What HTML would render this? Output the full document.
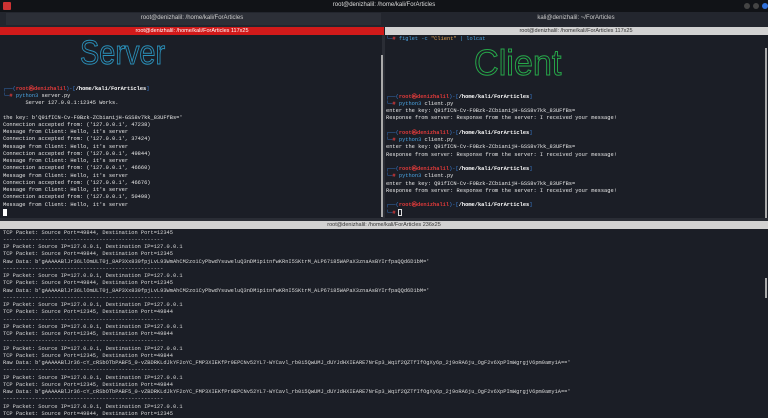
<!DOCTYPE html>
<html><head><meta charset="utf-8"><style>
*{margin:0;padding:0;box-sizing:border-box}
body{width:768px;height:414px;overflow:hidden;background:#1b1e26;font-family:"Liberation Mono",monospace;position:relative}
.abs{position:absolute}
.t{position:absolute;font-size:5.35px;line-height:7.25px;white-space:pre;color:#e6e6e6}
.sans{font-family:"Liberation Sans",sans-serif}
.r{color:#e03a3a;font-weight:bold}.b{color:#3a7fd6}.c{color:#4aa3e0}.y{color:#e0a050}.w{color:#fff;font-weight:bold}
</style></head><body>
<div class="abs" style="left:0;top:0;width:768px;height:12px;background:#111317"></div>
<div class="abs" style="left:3px;top:2px;width:8px;height:8px;background:#c33;border-radius:1px"></div>
<div class="abs sans" style="left:0;top:2px;width:768px;text-align:center;font-size:6px;color:#ddd">root@denizhalil: /home/kali/ForArticles</div>
<div class="abs" style="left:744px;top:3px;width:6px;height:6px;border-radius:50%;background:#444"></div>
<div class="abs" style="left:753px;top:3px;width:6px;height:6px;border-radius:50%;background:#444"></div>
<div class="abs" style="left:762px;top:3px;width:6px;height:6px;border-radius:50%;background:#2f6fd8"></div>
<div class="abs" style="left:0;top:12px;width:384px;height:15px;background:#23262e"></div>
<div class="abs" style="left:6px;top:13px;width:375px;height:12px;background:#2c2f37"></div>
<div class="abs sans" style="left:0;top:15px;width:384px;text-align:center;font-size:6px;color:#ccc">root@denizhalil: /home/kali/ForArticles</div>
<div class="abs" style="left:384px;top:12px;width:384px;height:15px;background:#23262e"></div>
<div class="abs sans" style="left:384px;top:15px;width:384px;text-align:center;font-size:6px;color:#ccc">kali@denizhalil: ~/ForArticles</div>
<div class="abs" style="left:0;top:27px;width:384px;height:8px;background:#d11a1a"></div>
<div class="abs sans" style="left:0;top:27.5px;width:384px;text-align:center;font-size:5.5px;color:#fff">root@denizhalil: /home/kali/ForArticles 117x25</div>
<div class="abs" style="left:385px;top:27px;width:383px;height:8px;background:#d2d2d2"></div>
<div class="abs sans" style="left:384px;top:27.5px;width:384px;text-align:center;font-size:5.5px;color:#333">root@denizhalil: /home/kali/ForArticles 117x25</div>
<div class="abs" style="left:382px;top:35px;width:3px;height:183px;background:#2a2d35"></div>
<div class="abs" style="left:381px;top:55px;width:2px;height:162px;background:#aaa"></div>
<div class="abs" style="left:765px;top:48px;width:2px;height:170px;background:#aaa"></div>
<div class="abs" style="left:80px;top:33px;font-family:'Liberation Sans',sans-serif;font-size:34px;line-height:40px;letter-spacing:0px;color:transparent;-webkit-text-stroke:1px #2a8fb8;transform:scaleX(0.85);transform-origin:left top">Server</div>
<div class="abs" style="left:474px;top:46px;font-family:'Liberation Sans',sans-serif;font-size:36px;line-height:34px;letter-spacing:0px;color:transparent;-webkit-text-stroke:1px #27a84a;transform:scaleX(0.95);transform-origin:left top">Client</div>
<div class="t" style="left:3px;top:85.5px"><span class="b">┌──(</span><span class="r">root㉿denizhalil</span><span class="b">)-[</span><span class="w">/home/kali/ForArticles</span><span class="b">]</span>
<span class="b">└─</span><span class="r">#</span> <span class="c">python3</span> server.py
       Server 127.0.0.1:12345 Works.

the key: b'Q91fICN-Cv-F0Bzk-ZCbianijH-GSS8v7kk_83UFfBs='
Connection accepted from: ('127.0.0.1', 47238)
Message from Client: Hello, it's server
Connection accepted from: ('127.0.0.1', 37424)
Message from Client: Hello, it's server
Connection accepted from: ('127.0.0.1', 49844)
Message from Client: Hello, it's server
Connection accepted from: ('127.0.0.1', 46660)
Message from Client: Hello, it's server
Connection accepted from: ('127.0.0.1', 46676)
Message from Client: Hello, it's server
Connection accepted from: ('127.0.0.1', 50498)
Message from Client: Hello, it's server</div>
<div class="abs" style="left:3px;top:209px;width:4px;height:7px;background:#fff"></div>
<div class="t" style="left:386px;top:36px"><span class="b">└─</span><span class="r">#</span> <span class="c">figlet -c</span> <span class="y">"Client"</span> <span class="c">| lolcat</span></div>
<div class="t" style="left:386px;top:93.5px"><span class="b">┌──(</span><span class="r">root㉿denizhalil</span><span class="b">)-[</span><span class="w">/home/kali/ForArticles</span><span class="b">]</span>
<span class="b">└─</span><span class="r">#</span> <span class="c">python3</span> client.py
enter the key: Q91fICN-Cv-F0Bzk-ZCbianijH-GSS8v7kk_83UFfBs=
Response from server: Response from the server: I received your message!

<span class="b">┌──(</span><span class="r">root㉿denizhalil</span><span class="b">)-[</span><span class="w">/home/kali/ForArticles</span><span class="b">]</span>
<span class="b">└─</span><span class="r">#</span> <span class="c">python3</span> client.py
enter the key: Q91fICN-Cv-F0Bzk-ZCbianijH-GSS8v7kk_83UFfBs=
Response from server: Response from the server: I received your message!

<span class="b">┌──(</span><span class="r">root㉿denizhalil</span><span class="b">)-[</span><span class="w">/home/kali/ForArticles</span><span class="b">]</span>
<span class="b">└─</span><span class="r">#</span> <span class="c">python3</span> client.py
enter the key: Q91fICN-Cv-F0Bzk-ZCbianijH-GSS8v7kk_83UFfBs=
Response from server: Response from the server: I received your message!

<span class="b">┌──(</span><span class="r">root㉿denizhalil</span><span class="b">)-[</span><span class="w">/home/kali/ForArticles</span><span class="b">]</span>
<span class="b">└─</span><span class="r">#</span></div>
<div class="abs" style="left:398px;top:209px;width:4px;height:7px;border:1px solid #ddd"></div>
<div class="abs" style="left:0;top:218px;width:768px;height:3px;background:#2a2d35"></div>
<div class="abs" style="left:0;top:221px;width:768px;height:8px;background:#d2d2d2"></div>
<div class="abs sans" style="left:0;top:221.5px;width:768px;text-align:center;font-size:5.5px;color:#333">root@denizhalil: /home/kali/ForArticles 236x25</div>
<div class="abs" style="left:765px;top:278px;width:2px;height:20px;background:#aaa"></div>
<div class="t" style="left:3px;top:229.5px;color:#d8d8d8">TCP Packet: Source Port=49844, Destination Port=12345
--------------------------------------------------
IP Packet: Source IP=127.0.0.1, Destination IP=127.0.0.1
TCP Packet: Source Port=49844, Destination Port=12345
Raw Data: b'gAAAAABlJr36LlOmULT0j_8AP3Xx839fpjLvL93WmAhCM2zo1CyPbwdYsuweluQ3nDM1p1tnfwKRnI5SKtrM_ALP67185WAPaX3znaAsBYIrfpaQQd6D1bM='
--------------------------------------------------
IP Packet: Source IP=127.0.0.1, Destination IP=127.0.0.1
TCP Packet: Source Port=49844, Destination Port=12345
Raw Data: b'gAAAAABlJr36LlOmULT0j_8AP3Xx839fpjLvL93WmAhCM2zo1CyPbwdYsuweluQ3nDM1p1tnfwKRnI5SKtrM_ALP67185WAPaX3znaAsBYIrfpaQQd6D1bM='
--------------------------------------------------
IP Packet: Source IP=127.0.0.1, Destination IP=127.0.0.1
TCP Packet: Source Port=12345, Destination Port=49844
--------------------------------------------------
IP Packet: Source IP=127.0.0.1, Destination IP=127.0.0.1
TCP Packet: Source Port=12345, Destination Port=49844
--------------------------------------------------
IP Packet: Source IP=127.0.0.1, Destination IP=127.0.0.1
TCP Packet: Source Port=12345, Destination Port=49844
Raw Data: b'gAAAAABlJr36-cY_cRSbOTbPABF5_0-vZBDRKLdJkYF2oYC_FMP3XIEKfPr9EPCNv52YL7-WYCavl_rb0i5QwUMJ_dUYJdHXIEARE7NrEp3_Wq1f2QZTfIfOgXy6p_2j9oRA6ju_OgF2v6XpPImWgrgjV6pm0amy1A=='
--------------------------------------------------
IP Packet: Source IP=127.0.0.1, Destination IP=127.0.0.1
TCP Packet: Source Port=12345, Destination Port=49844
Raw Data: b'gAAAAABlJr36-cY_cRSbOTbPABF5_0-vZBDRKLdJkYF2oYC_FMP3XIEKfPr9EPCNv52YL7-WYCavl_rb0i5QwUMJ_dUYJdHXIEARE7NrEp3_Wq1f2QZTfIfOgXy6p_2j9oRA6ju_OgF2v6XpPImWgrgjV6pm0amy1A=='
--------------------------------------------------
IP Packet: Source IP=127.0.0.1, Destination IP=127.0.0.1
TCP Packet: Source Port=49844, Destination Port=12345</div>
</body></html>
